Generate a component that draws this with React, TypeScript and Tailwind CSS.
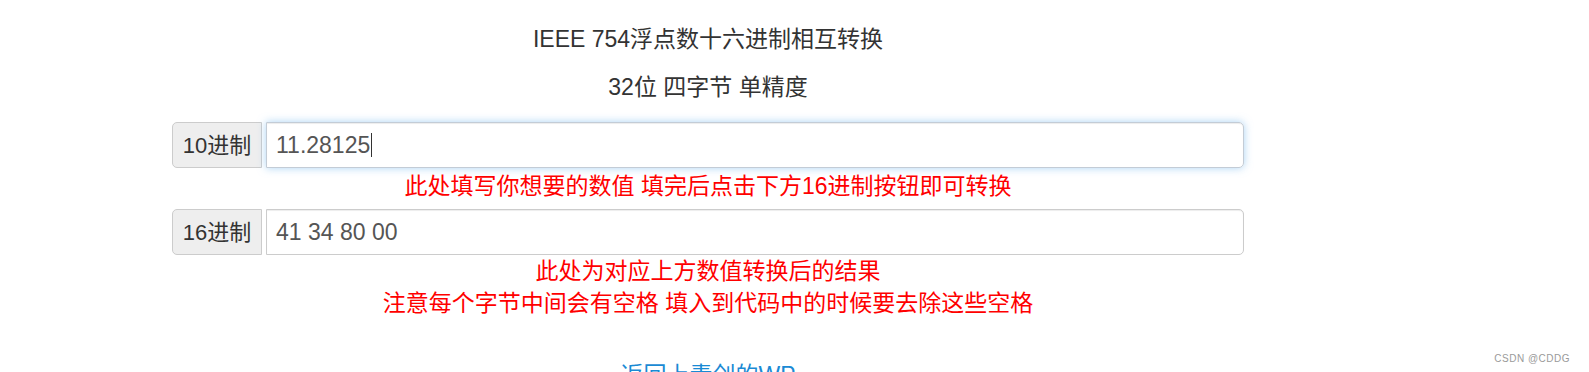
import React from 'react';

const font = "font-['Liberation_Sans','Noto_Sans_CJK_SC',sans-serif]";

interface FieldRowProps {
  label: string;
  value: string;
  focused?: boolean;
}

// bootstrap-style input group: addon + text box
const FieldRow: React.FC<FieldRowProps> = ({ label, value, focused }) => (
  <div className="flex h-[46px] gap-[4px] text-left">
    <div className="flex w-[90px] items-center justify-center rounded-l-[5px] border border-[#cccccc] bg-[#eeeeee] text-[22px] text-[#333333]">
      {label}
    </div>
    <div
      className={`flex flex-1 items-center rounded-r-[5px] border px-[9px] text-[#555555] ${
        focused
          ? 'border-[#c3ccd6] shadow-[inset_0_1px_1px_rgba(0,0,0,0.075),0_0_9px_rgba(102,175,233,0.55)]'
          : 'border-[#cccccc] shadow-[inset_0_1px_1px_rgba(0,0,0,0.075)]'
      }`}
    >
      <span>{value}</span>
      {focused && <span className="ml-[1px] inline-block h-[24px] w-[1px] bg-[#333333]" />}
    </div>
  </div>
);

export default function App() {
  return (
    <div className={`relative h-[372px] w-full overflow-hidden bg-white ${font} text-[23px]`}>
      <div className="ml-[172px] w-[1072px] pt-[24px] text-center">
        <div className="leading-[30px] text-[#333333]">IEEE 754浮点数十六进制相互转换</div>
        <div className="mt-[18px] leading-[30px] text-[#333333]">32位 四字节 单精度</div>

        <div className="mt-[20px]">
          <FieldRow label="10进制" value="11.28125" focused />
        </div>
        <div className="leading-[36px] text-[#ff0000]">
          此处填写你想要的数值 填完后点击下方16进制按钮即可转换
        </div>

        <div className="mt-[5px]">
          <FieldRow label="16进制" value="41 34 80 00" />
        </div>
        <div className="leading-[32px] text-[#ff0000]">
          <div>此处为对应上方数值转换后的结果</div>
          <div>注意每个字节中间会有空格 填入到代码中的时候要去除这些空格</div>
        </div>

        <div className="mt-[40px] leading-[32px]">
          <a href="#" className="text-[#1a8ad4]">返回上青创的WP</a>
        </div>
      </div>

      <div className="absolute right-[19px] top-[352px] text-[10px] leading-[14px] tracking-[0.5px] text-[#9a9a9a]">
        CSDN @CDDG
      </div>
    </div>
  );
}
